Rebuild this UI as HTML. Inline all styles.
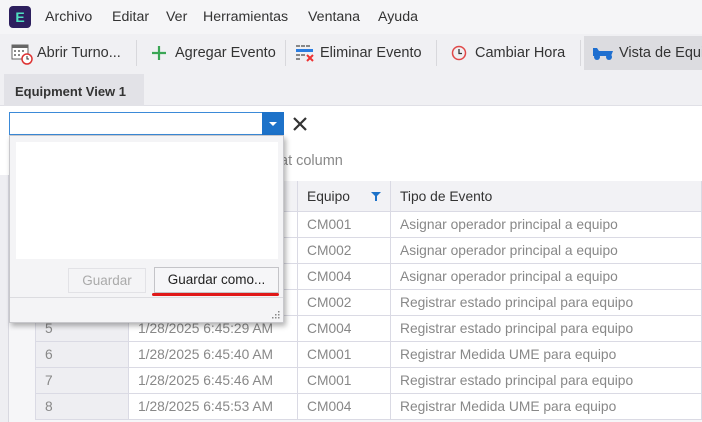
<!DOCTYPE html><html><head><style>
*{box-sizing:border-box;margin:0;padding:0}
body{width:702px;height:422px;overflow:hidden;background:#fff;font-family:"Liberation Sans",sans-serif;font-size:13px;color:#333;position:relative}
.a{position:absolute}
.menu{top:0;left:0;width:702px;height:34px;background:#f5f5f7}
.menu span{position:absolute;top:9px;font-size:14.2px;color:#333;white-space:nowrap}
.tb{top:34px;left:0;width:702px;height:38px;background:#f0f0f3;overflow:hidden}
.tb span{position:absolute;top:11px;font-size:14.5px;color:#333;white-space:nowrap}
.sep{position:absolute;top:6px;width:1px;height:26px;background:#d8d8dc}
.grid{left:0;top:181px;width:702px}
.cell{position:absolute;height:26px;border-right:1px solid #dadae4;border-bottom:1px solid #dadae4;padding:5px 9px;color:#888;font-size:13.8px;white-space:nowrap}
</style></head><body>
<div class="a menu">
<div class="a" style="left:9px;top:6px;width:22px;height:22px;background:#2d1f5e;border-radius:4px;color:#4fe0c0;font-weight:bold;font-size:14px;text-align:center;line-height:22px">E</div>
<span style="left:45px">Archivo</span><span style="left:112px">Editar</span><span style="left:166px">Ver</span><span style="left:203px">Herramientas</span><span style="left:308px">Ventana</span><span style="left:378px">Ayuda</span>
</div>
<div class="a tb">
<svg class="a" style="left:11px;top:9px" width="22" height="22"><rect x="1" y="2" width="16" height="14" fill="#fff" stroke="#666"/><rect x="1" y="2" width="16" height="3" fill="#666"/><g fill="#888"><rect x="3" y="7" width="2" height="2"/><rect x="7" y="7" width="2" height="2"/><rect x="11" y="7" width="2" height="2"/><rect x="3" y="11" width="2" height="2"/><rect x="7" y="11" width="2" height="2"/></g><circle cx="16" cy="16" r="5" fill="#fff" stroke="#d33" stroke-width="1.5"/><path d="M16 13v3h2" stroke="#333" fill="none"/></svg>
<span style="left:37px">Abrir Turno...</span>
<div class="sep" style="left:136px"></div>
<svg class="a" style="left:151px;top:11px" width="16" height="16"><path d="M8 1v14M1 8h14" stroke="#3aa655" stroke-width="2.2"/></svg>
<span style="left:175px">Agregar Evento</span>
<div class="sep" style="left:285px"></div>
<svg class="a" style="left:296px;top:10px" width="20" height="18"><g fill="#888"><rect x="0" y="1" width="4" height="2"/><rect x="5" y="1" width="4" height="2"/><rect x="10" y="1" width="4" height="2"/><rect x="0" y="10" width="4" height="2"/><rect x="5" y="10" width="4" height="2"/><rect x="0" y="14" width="4" height="2"/></g><rect x="0" y="5" width="17" height="3" fill="#2a7de1"/><path d="M11 11l6 6M17 11l-6 6" stroke="#e33" stroke-width="2"/></svg>
<span style="left:320px">Eliminar Evento</span>
<div class="sep" style="left:436px"></div>
<svg class="a" style="left:451px;top:11px" width="16" height="16"><circle cx="8" cy="8" r="6.5" fill="none" stroke="#e04848" stroke-width="1.5"/><path d="M8 4v4.5h3" stroke="#333" stroke-width="1.3" fill="none"/></svg>
<span style="left:475px">Cambiar Hora</span>
<div class="sep" style="left:580px"></div>
<div class="a" style="left:584px;top:2px;width:118px;height:34px;background:#dcdce0"></div>
<svg class="a" style="left:592px;top:11px" width="22" height="16"><path d="M1 3h4l2 3h14l-2 5H1z" fill="#1e6fd0"/><circle cx="5" cy="12" r="3" fill="#1e6fd0"/><circle cx="17" cy="12" r="3" fill="#1e6fd0"/></svg>
<span style="left:619px">Vista de Equi</span>
</div>
<div class="a" style="top:72px;left:0;width:702px;height:34px;background:#f0f0f3;border-bottom:1px solid #e0e0e6"></div>
<div class="a" style="top:74px;left:4px;width:140px;height:33px;background:#e2e2e7;font-weight:bold;font-size:13px;padding:10px 0 0 11px;color:#333">Equipment View 1</div>
<div class="a" style="top:106px;left:0;width:702px;height:316px;background:#fff"></div>
<div class="a" style="top:112px;left:9px;width:275px;height:23px;border:1px solid #3b8ad8;background:#fff"></div>
<div class="a" style="top:112px;left:262px;width:22px;height:23px;background:#1d72c9"><svg width="22" height="23"><path d="M7 10h8l-4 4z" fill="#fff"/></svg></div>
<div class="a" style="top:135px;left:256px;width:28px;height:3px;background:#e01818;border-radius:2px"></div>
<svg class="a" style="left:292px;top:116px" width="16" height="16"><path d="M2 2l12 12M14 2L2 14" stroke="#333" stroke-width="2.2"/></svg>
<div class="a" style="top:153px;left:280px;color:#888;font-size:14.5px">at column</div>
<div class="a" style="top:175px;left:0;width:9px;height:247px;background:#eeeef2;border-right:1px solid #d8d8e0"></div>
<div class="a" style="top:181px;left:9px;width:693px;height:241px;background:#f6f6f8"></div>
<div class="a grid">
<div class="cell" style="left:9px;top:0;width:26px;height:31px;background:#f2f2f5"></div>
<div class="cell" style="left:35px;top:0;width:94px;height:31px;background:#f2f2f5"></div>
<div class="cell" style="left:129px;top:0;width:169px;height:31px;background:#f2f2f5"></div>
<div class="cell" style="left:298px;top:0;width:93px;height:31px;background:#f2f2f5;color:#333;padding-top:8px">Equipo<svg style="position:absolute;left:73px;top:11px" width="10" height="9"><path d="M0 0h10L6 4v5H4V4z" fill="#1d72c9"/></svg></div>
<div class="cell" style="left:391px;top:0;width:311px;height:31px;background:#f2f2f5;color:#333;padding-top:8px">Tipo de Evento</div>
</div>
<div class="a" id="rows" style="left:0;top:212px"></div>
<script>
var d=[["1","1/28/2025 6:44:50 AM","CM001","Asignar operador principal a equipo"],["2","1/28/2025 6:44:58 AM","CM002","Asignar operador principal a equipo"],["3","1/28/2025 6:45:05 AM","CM004","Asignar operador principal a equipo"],["4","1/28/2025 6:45:15 AM","CM002","Registrar estado principal para equipo"],["5","1/28/2025 6:45:29 AM","CM004","Registrar estado principal para equipo"],["6","1/28/2025 6:45:40 AM","CM001","Registrar Medida UME para equipo"],["7","1/28/2025 6:45:46 AM","CM001","Registrar estado principal para equipo"],["8","1/28/2025 6:45:53 AM","CM004","Registrar Medida UME para equipo"]];
var h="";d.forEach(function(r,i){var t=i*26;
h+='<div class="cell" style="left:35px;top:'+t+'px;width:94px;background:#eeeef2;border-left:1px solid #dadae4">'+r[0]+'</div>';
h+='<div class="cell" style="left:129px;top:'+t+'px;width:169px;background:#fff">'+r[1]+'</div>';
h+='<div class="cell" style="left:298px;top:'+t+'px;width:93px;background:#fff">'+r[2]+'</div>';
h+='<div class="cell" style="left:391px;top:'+t+'px;width:311px;background:#fff">'+r[3]+'</div>';});
document.getElementById("rows").innerHTML=h;
</script>
<div class="a" style="top:135px;left:9px;width:275px;height:188px;background:#f4f4f6;border:1px solid #c8c8cc;box-shadow:2px 3px 5px rgba(0,0,0,.3)">
<div class="a" style="left:6px;top:6px;width:262px;height:117px;background:#fff"></div>
<div class="a" style="left:58px;top:132px;width:78px;height:25px;border:1px solid #e2e2e6;color:#aaa;text-align:center;line-height:23px;font-size:13.5px">Guardar</div>
<div class="a" style="left:144px;top:131px;width:125px;height:26px;border:1px solid #c4c4c8;background:#f6f6f8;color:#222;text-align:center;line-height:24px;font-size:13.5px">Guardar como...</div>
<div class="a" style="left:142px;top:157px;width:127px;height:3px;background:#e01818;border-radius:2px"></div>
<div class="a" style="left:0;top:161px;width:273px;height:1px;background:#dcdce0"></div>
<svg class="a" style="left:262px;top:175px" width="8" height="8"><g fill="#888"><rect x="6" y="0" width="1.5" height="1.5"/><rect x="3" y="3" width="1.5" height="1.5"/><rect x="6" y="3" width="1.5" height="1.5"/><rect x="0" y="6" width="1.5" height="1.5"/><rect x="3" y="6" width="1.5" height="1.5"/><rect x="6" y="6" width="1.5" height="1.5"/></g></svg>
</div>
</body></html>
